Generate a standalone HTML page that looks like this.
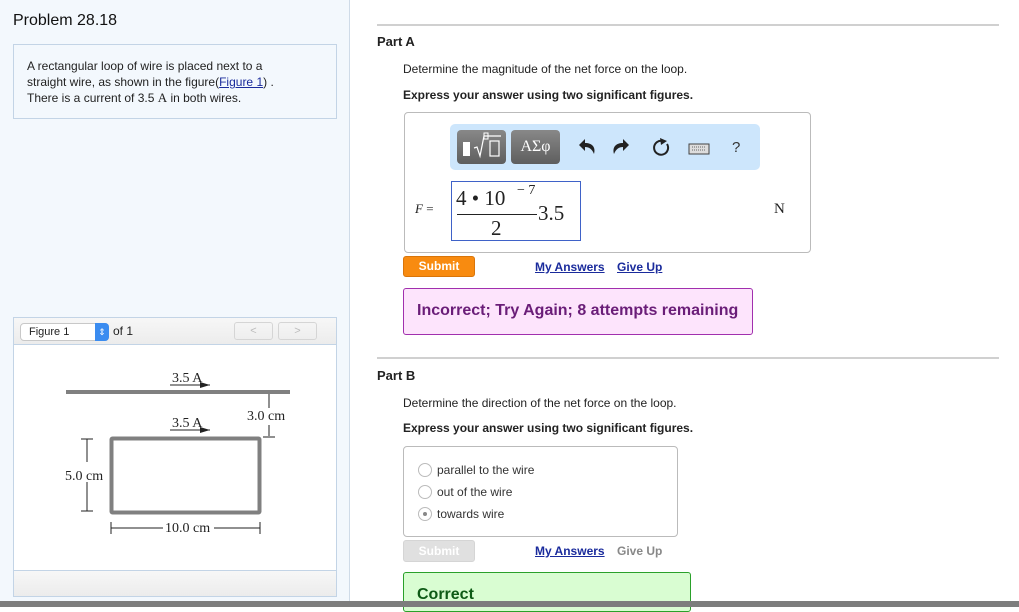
<!DOCTYPE html>
<html><head><meta charset="utf-8"><style>
*{margin:0;padding:0;box-sizing:border-box}
body{width:1019px;height:607px;overflow:hidden;background:#fff;font-family:"Liberation Sans",sans-serif;position:relative;color:#222}
.a{position:absolute}
.lnk{color:#1a2b9c;text-decoration:underline;font-weight:bold;font-size:12px}
.ser{font-family:"Liberation Serif",serif}
.rad{position:absolute;width:14px;height:14px;border:1px solid #bbb;border-radius:50%;background:#fff}
</style></head><body>
<div class="a" style="left:0;top:0;width:350px;height:607px;background:#f3f8fd;border-right:1px solid #cfdbe8"></div>
<div class="a" style="left:13px;top:12px;font-size:16px;color:#111">Problem 28.18</div>
<div class="a" style="left:13px;top:44px;width:324px;height:75px;border:1px solid #c3d4e6;background:#f3f8fd"></div>
<div class="a" style="left:27px;top:58px;font-size:12px;line-height:16px;color:#222">A rectangular loop of wire is placed next to a<br>straight wire, as shown in the figure(<span style="color:#1a2b9c;text-decoration:underline">Figure 1</span>) .<br>There is a current of 3.5 <span class="ser" style="font-size:13px">A</span> in both wires.</div>

<div class="a" style="left:13px;top:317px;width:324px;height:280px;border:1px solid #c3d4e6;background:#fff"></div>
<div class="a" style="left:14px;top:318px;width:322px;height:27px;background:linear-gradient(#f7f7f7,#ececec);border-bottom:1px solid #c3d4e6"></div>
<div class="a" style="left:14px;top:570px;width:322px;height:26px;background:linear-gradient(#f7f7f7,#ececec);border-top:1px solid #c3d4e6"></div>
<div class="a" style="left:20px;top:323px;width:89px;height:18px;border:1px solid #c8c8c8;border-radius:4px;background:#fff;font-size:11px;padding:2px 0 0 8px">Figure 1</div>
<div class="a" style="left:95px;top:323px;width:14px;height:18px;background:#3b8cf0;border-radius:0 4px 4px 0;color:#fff;font-size:9px;text-align:center;line-height:18px">⇕</div>
<div class="a" style="left:113px;top:324px;font-size:12px">of 1</div>
<div class="a" style="left:234px;top:322px;width:39px;height:18px;border:1px solid #d5d5d5;border-radius:3px;color:#bbb;font-size:11px;text-align:center;line-height:16px">&lt;</div>
<div class="a" style="left:278px;top:322px;width:39px;height:18px;border:1px solid #d5d5d5;border-radius:3px;color:#bbb;font-size:11px;text-align:center;line-height:16px">&gt;</div>
<svg class="a" style="left:0;top:310px" width="350" height="297" font-family="Liberation Serif" font-size="14" fill="#222">
<text x="172" y="72">3.5 A</text>
<line x1="170" y1="75" x2="210" y2="75" stroke="#222"/><polygon points="200,72 210,75 200,78" fill="#222"/>
<rect x="66" y="80" width="224" height="4" fill="#808080"/>
<text x="172" y="117">3.5 A</text>
<line x1="170" y1="120" x2="210" y2="120" stroke="#222"/><polygon points="200,117 210,120 200,123" fill="#222"/>
<text x="247" y="110">3.0 cm</text>
<line x1="269" y1="84" x2="269" y2="98" stroke="#222"/><line x1="269" y1="115" x2="269" y2="126" stroke="#222"/><line x1="263" y1="127" x2="275" y2="127" stroke="#222"/>
<rect x="111.5" y="128.5" width="148" height="74" fill="none" stroke="#808080" stroke-width="4" rx="1"/>
<line x1="81" y1="129" x2="93" y2="129" stroke="#222"/><line x1="81" y1="201" x2="93" y2="201" stroke="#222"/>
<line x1="87" y1="129" x2="87" y2="152" stroke="#222"/><line x1="87" y1="172" x2="87" y2="201" stroke="#222"/>
<text x="65" y="170">5.0 cm</text>
<line x1="111" y1="212" x2="111" y2="224" stroke="#222"/><line x1="260" y1="212" x2="260" y2="224" stroke="#222"/>
<line x1="111" y1="218" x2="163" y2="218" stroke="#222"/><line x1="214" y1="218" x2="260" y2="218" stroke="#222"/>
<text x="165" y="222">10.0 cm</text>
</svg>

<div class="a" style="left:377px;top:24px;width:622px;height:2px;background:#d0d0d0"></div>
<div class="a" style="left:377px;top:34px;font-size:13px;font-weight:bold">Part A</div>
<div class="a" style="left:403px;top:62px;font-size:12px">Determine the magnitude of the net force on the loop.</div>
<div class="a" style="left:403px;top:88px;font-size:12px;font-weight:bold">Express your answer using two significant figures.</div>
<div class="a" style="left:404px;top:112px;width:407px;height:141px;border:1px solid #bbb;border-radius:4px"></div>
<div class="a" style="left:450px;top:124px;width:310px;height:46px;background:#cde6fc;border-radius:5px"></div>
<div class="a" style="left:457px;top:130px;width:49px;height:34px;background:linear-gradient(#888,#5e5e5e);border-radius:4px"></div>
<svg class="a" style="left:457px;top:130px" width="49" height="34"><rect x="6" y="12" width="7" height="14" fill="#fff"/><path d="M17 18 L20 17 L23 26 L27 6 L44 6" fill="none" stroke="#fff" stroke-width="1.2"/><rect x="33" y="11" width="9" height="15" fill="none" stroke="#fff" stroke-width="1.2"/><rect x="27" y="3" width="4" height="6" fill="none" stroke="#fff"/></svg>
<div class="a ser" style="left:511px;top:130px;width:49px;height:34px;background:linear-gradient(#888,#5e5e5e);border-radius:4px;color:#fff;font-size:16px;text-align:center;line-height:34px">ΑΣφ</div>
<svg class="a" style="left:575px;top:136px" width="170" height="24">
<path d="M4 9 L10 3 L10 7 C17 7 21 11 19 18 C17 13 14 11 10 11 L10 15 Z" fill="#222"/>
<path d="M54 9 L48 3 L48 7 C41 7 37 11 39 18 C41 13 44 11 48 11 L48 15 Z" fill="#222"/>
<path d="M88 5 A7 7 0 1 0 92 8" fill="none" stroke="#222" stroke-width="2"/><polygon points="85,2 92,5 86,9" fill="#222"/>
<rect x="114" y="8" width="20" height="10" fill="#ddd" stroke="#444"/><line x1="117" y1="11" x2="131" y2="11" stroke="#666" stroke-dasharray="1 1"/><line x1="117" y1="14" x2="131" y2="14" stroke="#666" stroke-dasharray="1 1"/>
</svg>
<div class="a" style="left:732px;top:139px;font-size:15px;color:#333">?</div>
<div class="a ser" style="left:415px;top:201px;font-size:13px"><i>F</i> =</div>
<div class="a" style="left:451px;top:181px;width:130px;height:60px;border:1px solid #3f62c8"></div>
<div class="a ser" style="left:456px;top:186px;font-size:21px">4 • 10</div>
<div class="a ser" style="left:517px;top:183px;font-size:14px">− 7</div>
<div class="a" style="left:457px;top:214px;width:80px;height:1px;background:#222"></div>
<div class="a ser" style="left:491px;top:216px;font-size:21px">2</div>
<div class="a ser" style="left:538px;top:201px;font-size:21px">3.5</div>
<div class="a ser" style="left:774px;top:201px;font-size:15px">N</div>
<div class="a" style="left:403px;top:256px;width:72px;height:21px;background:#f88b10;border:1px solid #d9750a;border-radius:3px;color:#fff;font-weight:bold;font-size:12px;text-align:center;line-height:19px">Submit</div>
<div class="a lnk" style="left:535px;top:260px">My Answers</div>
<div class="a lnk" style="left:617px;top:260px">Give Up</div>
<div class="a" style="left:403px;top:288px;width:350px;height:47px;background:#fde4fc;border:1px solid #a12fae;border-radius:3px;color:#6a1d78;font-weight:bold;font-size:16px;padding:13px 0 0 13px">Incorrect; Try Again; 8 attempts remaining</div>

<div class="a" style="left:377px;top:357px;width:622px;height:2px;background:#d0d0d0"></div>
<div class="a" style="left:377px;top:368px;font-size:13px;font-weight:bold">Part B</div>
<div class="a" style="left:403px;top:396px;font-size:12px">Determine the direction of the net force on the loop.</div>
<div class="a" style="left:403px;top:421px;font-size:12px;font-weight:bold">Express your answer using two significant figures.</div>
<div class="a" style="left:403px;top:446px;width:275px;height:91px;border:1px solid #bbb;border-radius:4px"></div>
<div class="rad" style="left:418px;top:463px"></div>
<div class="rad" style="left:418px;top:485px"></div>
<div class="rad" style="left:418px;top:507px"><div style="width:4px;height:4px;background:#888;border-radius:50%;margin:4px"></div></div>
<div class="a" style="left:437px;top:463px;font-size:12px;color:#333">parallel to the wire</div>
<div class="a" style="left:437px;top:485px;font-size:12px;color:#333">out of the wire</div>
<div class="a" style="left:437px;top:507px;font-size:12px;color:#333">towards wire</div>
<div class="a" style="left:403px;top:540px;width:72px;height:22px;background:#e0e0e0;border:1px solid #d5d5d5;border-radius:3px;color:#fff;font-weight:bold;font-size:12px;text-align:center;line-height:20px">Submit</div>
<div class="a lnk" style="left:535px;top:544px">My Answers</div>
<div class="a" style="left:617px;top:544px;font-size:12px;font-weight:bold;color:#888">Give Up</div>
<div class="a" style="left:403px;top:572px;width:288px;height:40px;background:#d9fdd2;border:1px solid #2aa02a;border-radius:3px;color:#0e5a16;font-weight:bold;font-size:16px;padding:13px 0 0 13px">Correct</div>
<div class="a" style="left:0;top:601px;width:1019px;height:6px;background:#7d7d7d"></div>
</body></html>
